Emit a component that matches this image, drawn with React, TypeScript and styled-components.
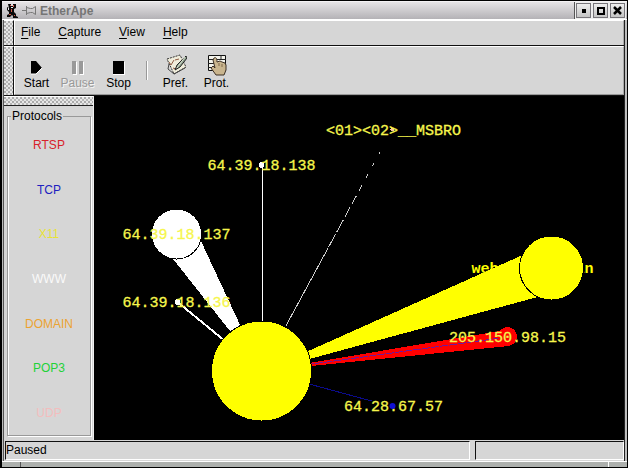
import React from 'react';
import styled, { createGlobalStyle } from 'styled-components';

const face = '#d6d6d6';

const GlobalStyle = createGlobalStyle`
  * { box-sizing: border-box; }
  body {
    margin: 0;
    background: #000;
    color: #000;
    font: 12px/14px "Liberation Sans", Arial, sans-serif;
  }
  button { font: inherit; color: inherit; margin: 0; padding: 0; border: 0; background: none; }
`;

const Window = styled.div`
  display: flex;
  flex-direction: column;
  height: 100vh;
  padding: 1px 1px 1px 2px;
  background: #000;
`;

const TitleBar = styled.header`
  display: flex;
  align-items: center;
  height: 18px;
  flex: none;
  padding: 0 2px 0 4px;
  border-top: 1px solid #f4f2f4;
  background: linear-gradient(#e6e4e6, #b4b2b6);
`;

const Title = styled.h1`
  flex: 1;
  margin: 0 0 0 4px;
  font-size: 12px;
  line-height: 16px;
  color: #757575;
`;

const PinIcon = styled.svg`
  margin-left: 4px;
`;

const WindowButtons = styled.div`
  display: flex;
  gap: 2px;
  height: 17px;
  align-items: center;
  padding-left: 1px;
  border-left: 1px solid #555;
`;

const WindowButton = styled.button`
  display: grid;
  place-items: center;
  width: 15px;
  height: 15px;
  border: 1px solid #77757a;
  outline: 1px solid #eee;
  background: linear-gradient(#eee, #c4c4c4);
`;

const Frame = styled.div`
  display: flex;
  flex-direction: column;
  flex: 1;
  min-height: 0;
  padding: 0 2px 0 1px;
  border-top: 1px solid #fff;
  background: #bdbdbd;
`;

const Body = styled.div`
  display: flex;
  flex-direction: column;
  flex: 1;
  min-height: 0;
  border-left: 1px solid #555;
  border-right: 1px solid #222;
  background: ${face};
`;

const Bar = styled.div`
  display: flex;
  flex: none;
  border-bottom: 1px solid #111;
`;

const Grip = styled.div<{ $across?: boolean }>`
  flex: none;
  ${({ $across }) => ($across ? 'height: 10px; width: 100%; border-bottom: 1px solid #222;' : 'width: 10px; border-right: 1px solid #111;')}
  border-top: 1px solid #fff;
  background:
    radial-gradient(circle at 1px 1px, #aaa 1px, transparent 1px) 0 0 / 4px 4px,
    radial-gradient(circle at 1px 1px, #b8b8b8 1px, transparent 1px) 2px 2px / 4px 4px,
    #e6e6e6;
`;

const BarContent = styled.nav`
  display: flex;
  flex: 1;
  border-top: 1px solid #fff;
  border-left: 1px solid #fff;
  border-right: 1px solid #aaa;
`;

const Menus = styled(BarContent)`
  gap: 18px;
  height: 25px;
  padding: 0 0 2px 6px;
  align-items: center;
`;

const Mnemonic = styled.span`
  text-decoration: underline;
  text-underline-offset: 2px;
`;

const Tools = styled(BarContent)`
  height: 49px;
  padding: 7px 0 0 1px;
  border-bottom: 1px solid #999;
`;

const Tool = styled.button`
  display: flex;
  flex-direction: column;
  align-items: center;
  width: 41px;
  height: 36px;

  &:disabled { color: #999; text-shadow: 1px 1px #f4f4f4; }
`;

const Divider = styled.div`
  width: 2px;
  height: 19px;
  margin: 7px 7px 0;
  border-left: 1px solid #999;
  border-right: 1px solid #fff;
`;

const Main = styled.main`
  display: flex;
  flex: 1;
  min-height: 0;
`;

const Side = styled.aside`
  display: flex;
  flex-direction: column;
  flex: none;
  width: 90px;
  border-right: 1px solid #eee;
`;

const Group = styled.fieldset`
  display: flex;
  flex: 1;
  min-width: 0;
  margin: 3px 2px 4px 3px;
  padding: 0;
  border: 1px solid #999;
  box-shadow: 1px 1px #fff, inset 1px 0 #fff;

  legend { margin-left: 3px; padding: 0 1px; background: ${face}; }
`;

const Protocols = styled.ul`
  display: flex;
  flex-direction: column;
  justify-content: space-around;
  flex: 1;
  margin: 0;
  padding: 0;
  list-style: none;
  text-align: center;
`;

const Protocol = styled.li<{ $color: string }>`
  color: ${({ $color }) => $color};
`;

const Diagram = styled.svg`
  display: block;
  flex: 1;
  min-width: 0;
  height: 100%;
  background: #000;
  font: 15px "Liberation Mono", monospace;
`;

const StatusBar = styled.footer`
  display: flex;
  gap: 5px;
  flex: none;
  height: 21px;
  padding: 1px 0 1px 1px;
`;

const Status = styled.div<{ $grow: number }>`
  flex: ${({ $grow }) => $grow} 1 0;
  padding: 0;
  border: 1px solid #111;
  border-right-color: #fff;
  border-bottom-color: #fff;
  line-height: 16px;
`;

const ResizeEdge = styled.div`
  flex: none;
  height: 6px;
  margin: 0 -2px 0 -1px;
  padding: 0 18px;
  border-top: 1px solid #fff;
  background: #adb0ad;

  &::before {
    content: "";
    display: block;
    height: 5px;
    border-left: 1px solid #555;
    border-right: 1px solid #fff;
  }
`;

const protocols = [
  ['RTSP', '#d8222a'],
  ['TCP', '#2020c0'],
  ['X11', '#e8e336'],
  ['WWW', '#fafafa'],
  ['DOMAIN', '#eca331'],
  ['POP3', '#22d238'],
  ['UDP', '#f3bdbd'],
];

const labels: [number, number, string][] = [
  [394, 135, '<01><02>__MSBRO'],
  [262, 170, '64.39.18.138'],
  [177, 239, '64.39.18.137'],
  [177, 307, '64.39.18.136'],
  [508, 342, '205.150.98.15'],
  [394, 411, '64.28.67.57'],
];

const PlayIcon = () => (
  <svg width="22" height="22" aria-hidden="true">
    <path d="M5 7h5l6 7-6 6H5z" fill="#000" />
    <path d="M16 14l-6 6H5" fill="none" stroke="#fff" />
  </svg>
);
const PauseIcon = () => (
  <svg width="22" height="22" aria-hidden="true">
    <path d="M6 8h4v13H6zM13 8h4v13h-4z" fill="#fff" />
    <path d="M5 7h4v13H5zM12 7h4v13h-4z" fill="#999" />
  </svg>
);
const StopIcon = () => (
  <svg width="22" height="22" aria-hidden="true">
    <path d="M5 8h12v13H5z" fill="#fff" />
    <path d="M5 7h11v13H5z" fill="#000" />
  </svg>
);
const PrefIcon = () => (
  <svg width="22" height="22" aria-hidden="true">
    <path d="M2 5L15 1l6 12-12 7z" fill="#f0eddb" stroke="#333" strokeDasharray="2 1" />
    <path d="M4 10l-1 5 6 5 11-6" fill="none" stroke="#444" />
    <path d="M4 8l2 3 3-5M8 14l3 1 3-3M10 6l4-1" fill="none" stroke="#8f5b44" />
    <path d="M21 2l-9 9-2 5 5-3 7-9z" fill="#8da08f" stroke="#222" />
    <path d="M20 3l-8 11" stroke="#dde5cf" />
  </svg>
);
const ProtIcon = () => (
  <svg width="22" height="22" aria-hidden="true">
    <path d="M2.500 1.500h17v15h-17z" fill="#f4f4ec" stroke="#111" />
    <path d="M2 5.500h18M2 9.500h18M2 13.500h18M15 1v4" stroke="#222" fill="none" />
    <path d="M8 4c2-1 3 0 3 4l3-1 2 1 3 1 1 2v5l-2 5h-8l-5-7 2-2 2 2-2-8z" fill="#c9b58e" stroke="#3c3025" />
    <path d="M13 9v3M16 10v3" stroke="#816b4d" />
  </svg>
);

const Node = ({ x, y, r, fill }: { x: number; y: number; r: number; fill: string }) => (
  <circle cx={x} cy={y} r={r} fill={fill} stroke="#000" />
);

const Menu = ({ name }: { name: string }) => (
  <button type="button"><Mnemonic>{name[0]}</Mnemonic>{name.slice(1)}</button>
);

export default function App() {
  return (
    <>
      <GlobalStyle />
      <Window>
        <TitleBar>
          <svg width="12" height="15" viewBox="0 0 12 15" aria-hidden="true">
            <path d="M2 1h3v2h2V1h3v4L8 6v3l2 2v2l2 1v1H7v-2l-1-1-2 2H1v-2l2-1V9L1 7V4l2 1z" fill="#080808" />
            <path d="M4 2h1v1H4zM7 2h1v2H7zM5 6h1v3H5zM3 11h2v1H3zM8 12h1v1H8z" fill="#d35543" />
            <path d="M5 4h2v1H5zM2 5h1v2H2z" fill="#eee" />
          </svg>
          <PinIcon width="14" height="12" viewBox="0 0 14 12" fill="none" stroke="#777" aria-hidden="true">
            <path d="M0 5.500h4M4.500 1v9M4.500 2.500l4 1h2l3-2v8l-3-2h-2l-4 1" />
          </PinIcon>
          <Title>EtherApe</Title>
          <WindowButtons>
            <WindowButton type="button" aria-label="Minimize">
              <svg width="11" height="11"><path d="M4 4h4v4H4z" /></svg>
            </WindowButton>
            <WindowButton type="button" aria-label="Maximize">
              <svg width="11" height="11"><path d="M3 3h6v6H3z" fill="none" stroke="#000" strokeWidth="2" /></svg>
            </WindowButton>
            <WindowButton type="button" aria-label="Close">
              <svg width="11" height="11"><path d="M2 2l7 7M9 2L2 9" stroke="#000" strokeWidth="2.500" /></svg>
            </WindowButton>
          </WindowButtons>
        </TitleBar>
        <Frame>
          <Body>
            <Bar>
              <Grip />
              <Menus aria-label="Menu">
                {['File', 'Capture', 'View', 'Help'].map((name) => <Menu key={name} name={name} />)}
              </Menus>
            </Bar>
            <Bar>
              <Grip />
              <Tools aria-label="Tools">
                <Tool type="button"><PlayIcon />Start</Tool>
                <Tool type="button" disabled><PauseIcon />Pause</Tool>
                <Tool type="button"><StopIcon />Stop</Tool>
                <Divider />
                <Tool type="button"><PrefIcon />Pref.</Tool>
                <Tool type="button"><ProtIcon />Prot.</Tool>
              </Tools>
            </Bar>
            <Main>
              <Side>
                <Grip $across />
                <Group>
                  <legend>Protocols</legend>
                  <Protocols>
                    {protocols.map(([name, color]) => <Protocol key={color} $color={color}>{name}</Protocol>)}
                  </Protocols>
                </Group>
              </Side>
              <Diagram viewBox="95 96 529 344" role="img" aria-label="Network traffic">
                <g fill="#ff0" textAnchor="middle">
                  <text x="472" y="273" textAnchor="start" fontWeight="bold">web</text>
                  <text x="594" y="273" textAnchor="end" fontWeight="bold">an</text>
                </g>
                <g shapeRendering="crispEdges">
                  <path d="M172 257L201 240L262 371z" fill="#fff" />
                  <path d="M262 371L178 302" stroke="#fff" strokeWidth="2" />
                  <path d="M262.500 371V165" stroke="#fff" />
                  <path
                    d="M262 371L393 129"
                    stroke="#ccc"
                    strokeDasharray="140 1 15 2 14 3 11 4 9 6 7 7 5 9 4 10 2 12 1 40"
                  />
                  <path d="M521 256L538 297L262 372z" fill="#ff0" />
                  <path d="M506 330L509 346L262 371z" fill="#f00" />
                  <path d="M262 371L508 337" stroke="#71189c" strokeDasharray="8 1" />
                  <path d="M262 371L372 401" stroke="#0b0b8c" />
                  <Node x={262} y={371} r={50} fill="#ff0" />
                  <Node x={177} y={234} r={25} fill="#fff" />
                  <Node x={552} y={268} r={32} fill="#ff0" />
                  <circle cx="508" cy="336.500" r="9.500" fill="#f00" />
                  <circle cx="262" cy="165" r="3" fill="#fff" />
                  <circle cx="178" cy="302" r="3" fill="#fff" />
                  <circle cx="393" cy="129.500" r="2" fill="#ffc0a0" />
                </g>
                <g fill="#f6f64c" stroke="#f6f64c" strokeWidth="0.300" textAnchor="middle">
                  {labels.map(([x, y, text]) => <text key={text} x={x} y={y}>{text}</text>)}
                </g>
                <circle cx="393" cy="406" r="3" fill="#1010d0" />
              </Diagram>
            </Main>
            <StatusBar>
              <Status $grow={465}>Paused</Status>
              <Status $grow={148} />
            </StatusBar>
          </Body>
          <ResizeEdge />
        </Frame>
      </Window>
    </>
  );
}
